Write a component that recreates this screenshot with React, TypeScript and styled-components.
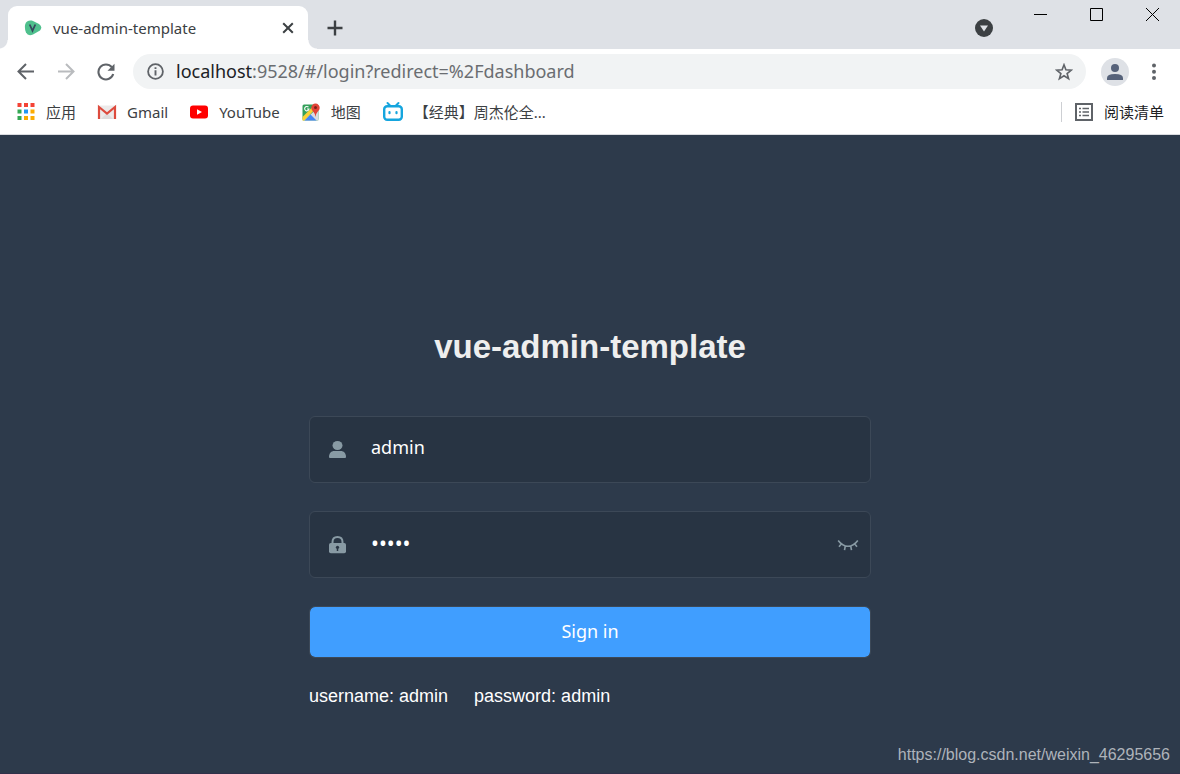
import React, { useState } from 'react';
import styled, { createGlobalStyle } from 'styled-components';

const uiFont = `"Noto Sans", "Noto Sans CJK SC", sans-serif`;
const pageFont = `"Liberation Sans", "Noto Sans CJK SC", sans-serif`;

const GlobalStyle = createGlobalStyle`
  *, *::before, *::after { box-sizing: border-box; }
  body { margin: 0; background: #2d3a4b; }
  svg { display: block; flex: none; }
  button { border: 0; padding: 0; background: none; font: inherit; color: inherit; cursor: pointer; }
`;

const Browser = styled.div`
  min-height: 100vh;
  display: flex;
  flex-direction: column;
  font-family: ${uiFont};
`;

const TitleBar = styled.header`
  display: flex;
  height: 49px;
  padding-left: 8px;
  background: #dee1e6;
`;

const Tab = styled.div`
  position: relative;
  display: flex;
  align-items: center;
  width: 300px;
  height: 43px;
  margin-top: 6px;
  padding: 0 13px 0 16px;
  border-radius: 9px 9px 0 0;
  background: #fff;
  color: #3c4043;

  &::before, &::after {
    content: '';
    position: absolute;
    bottom: 0;
    width: 9px;
    height: 9px;
  }
  &::before {
    right: 100%;
    background: radial-gradient(circle at 0 0, transparent 8px, #fff 9px);
  }
  &::after {
    left: 100%;
    background: radial-gradient(circle at 100% 0, transparent 8px, #fff 9px);
  }
`;

const TabTitle = styled.span`
  flex: 1;
  margin-left: 11px;
  font-size: 15px;
  line-height: 20px;
  white-space: nowrap;
`;

const IconButton = styled.button<{ $w: number; $h: number }>`
  display: flex;
  flex: none;
  align-items: center;
  justify-content: center;
  width: ${p => p.$w}px;
  height: ${p => p.$h}px;
`;

const TabActions = styled.div`
  display: flex;
  align-items: center;
  flex: 1;
  padding: 6px 0 0 11px;
`;

const TabSearch = styled.div`
  display: flex;
  align-items: center;
  padding: 6px 19px 0 0;
`;

const WindowControls = styled.div`
  display: flex;
  align-items: flex-start;
`;

const Toolbar = styled.nav`
  display: flex;
  align-items: center;
  height: 45px;
  padding: 0 7px 0 6px;
  background: #fff;
`;

const AddressBar = styled.div`
  display: flex;
  align-items: center;
  flex: 1;
  height: 35px;
  margin: 0 9px 0 7px;
  padding: 0 7px 0 14px;
  border-radius: 18px;
  background: #f1f3f4;
`;

const Url = styled.a`
  flex: 1;
  margin-left: 12px;
  padding-bottom: 2px;
  color: #6a6d71;
  font-size: 18px;
  line-height: 24px;
  text-decoration: none;
  white-space: nowrap;
`;

const Host = styled.span`
  color: #202124;
`;

const Bookmarks = styled.nav`
  display: flex;
  align-items: center;
  height: 41px;
  padding: 0 16px 4px;
  border-bottom: 1px solid #dadce0;
  background: #fff;
`;

const Bookmark = styled.a`
  display: flex;
  align-items: center;
  gap: 10px;
  margin-right: 21px;
  color: #3c4043;
  font-size: 15px;
  line-height: 20px;
  text-decoration: none;
  white-space: nowrap;
`;

const ReadingList = styled.button`
  display: flex;
  align-items: center;
  gap: 10px;
  height: 20px;
  margin-left: auto;
  padding-left: 12px;
  border-left: 1px solid #cdcfd3;
  color: #202124;
  font-size: 15px;
  line-height: 20px;
  white-space: nowrap;
`;

const LoginPage = styled.main`
  position: relative;
  flex: 1;
  padding: 191px 24px 64px;
  border-bottom: 1px solid #30304a;
  background: #2d3a4b;
  font-family: ${pageFont};
`;

const LoginForm = styled.form`
  max-width: 562px;
  margin: 0 auto;
`;

const Title = styled.h1`
  margin: 0 0 48px;
  color: #eee;
  font-size: 33px;
  font-weight: 700;
  line-height: 42px;
  text-align: center;
`;

const Field = styled.div`
  display: flex;
  align-items: center;
  height: 67px;
  margin-bottom: 28px;
  padding: 0 11px 0 18px;
  border: 1px solid #3c4857;
  border-radius: 6px;
  background: #283443;
  color: #889aa4;
`;

const FieldLabel = styled.label`
  display: flex;
`;

const TextInput = styled.input`
  flex: 1;
  min-width: 0;
  height: 50px;
  margin: 0 0 6px 16px;
  padding: 0 8px;
  border: 0;
  outline: 0;
  background: transparent;
  color: #fff;
  font-family: ${uiFont};
  font-size: 18px;

  &[type='password'] {
    padding-top: 2px;
    font-size: 21px;
  }
`;

const SubmitButton = styled.button`
  display: block;
  width: 100%;
  height: 52px;
  margin-bottom: 26px;
  padding-bottom: 2px;
  border: 1px solid #3c4857;
  border-radius: 6px;
  background: #409eff;
  background-clip: padding-box;
  color: #fff;
  font-family: ${uiFont};
  font-size: 18px;
  line-height: 24px;
`;

const Tips = styled.div`
  display: flex;
  gap: 26px;
  color: #fff;
  font-size: 18px;
  line-height: 24px;
`;

const Watermark = styled.a`
  position: absolute;
  right: 10px;
  bottom: 8px;
  color: #aeb3ba;
  font-size: 16px;
  line-height: 20px;
  text-decoration: none;
`;

const VueIcon = () => (
  <svg width="18" height="18" viewBox="0 0 18 18">
    <path d="M1 6C2 1.500 6 1 9 2l6 3q4 3 1 6.500L9 15.500q-5 2-7-2Q.5 10 1 6z" fill="#4fc08d" />
    <path d="M5.700 5.500 8.500 11.800l2.800-6.300" fill="none" stroke="#35495e" strokeWidth="1.800" />
  </svg>
);

const CloseIcon = () => (
  <svg width="12" height="12" viewBox="0 0 12 12" stroke="#3c4043" strokeWidth="2">
    <path d="m1.200 1.200 9.600 9.600m0-9.600-9.600 9.600" />
  </svg>
);

const PlusIcon = () => (
  <svg width="16" height="16" viewBox="0 0 16 16" stroke="#3c4043" strokeWidth="2.400">
    <path d="M8 .5v15M.5 8h15" />
  </svg>
);

const TabSearchIcon = () => (
  <svg width="18" height="18" viewBox="0 0 18 18">
    <circle cx="9" cy="9" r="9" fill="#3c4043" />
    <path d="M5 6.500h8L9 12.500z" fill="#dee1e6" />
  </svg>
);

const MinimizeIcon = () => (
  <svg width="13" height="13" viewBox="0 0 13 13" stroke="#000"><path d="M0 6.500h13" /></svg>
);
const MaximizeIcon = () => (
  <svg width="13" height="13" viewBox="0 0 13 13" stroke="#000" fill="none"><path d="M.5.5h12v12H.5z" /></svg>
);
const WindowCloseIcon = () => (
  <svg width="13" height="13" viewBox="0 0 13 13" stroke="#000"><path d="m0 0 13 13M13 0 0 13" /></svg>
);

const ArrowIcon = ({ color, flip }: { color: string; flip?: boolean }) => (
  <svg width="18" height="18" viewBox="0 0 18 18" fill="none" stroke={color} strokeWidth="2">
    <path d={flip ? 'M1 8.500h15M9 1 16.500 8.500 9 16' : 'M17 8.500H2M9 1 1.500 8.500 9 16'} />
  </svg>
);

const ReloadIcon = () => (
  <svg width="18" height="18" viewBox="0 0 18 18">
    <path d="M14.800 4.200A7.500 7.500 0 1 0 16.200 11" fill="none" stroke="#5f6368" strokeWidth="2.100" />
    <path d="M17.500.8v7h-7z" fill="#5f6368" />
  </svg>
);

const InfoIcon = () => (
  <svg width="17" height="17" viewBox="0 0 17 17" fill="none" stroke="#5f6368">
    <circle cx="8.500" cy="8.500" r="7.400" strokeWidth="1.800" />
    <path d="M8.500 7.300v5.200M8.500 4.200v1.900" strokeWidth="1.900" />
  </svg>
);

const StarIcon = () => (
  <svg width="18" height="18" viewBox="0 0 18 18" fill="none" stroke="#5f6368" strokeWidth="1.600">
    <path d="m9 1.800 1.900 5 5.500.3-4.300 3.400 1.500 5.200L9 12.800l-4.600 2.900 1.500-5.200-4.300-3.400 5.500-.3z" />
  </svg>
);

const ProfileIcon = () => (
  <svg width="28" height="28" viewBox="0 0 28 28">
    <circle cx="14" cy="14" r="14" fill="#dee1e6" />
    <circle cx="14" cy="10" r="4" fill="#56627a" />
    <path d="M6 22v-2q0-4 8-4t8 4v2z" fill="#56627a" />
  </svg>
);

const MenuIcon = () => (
  <svg width="4" height="18" viewBox="0 0 4 18" fill="#5f6368">
    <circle cx="2" cy="2.500" r="2" /><circle cx="2" cy="8.700" r="2" /><circle cx="2" cy="15" r="2" />
  </svg>
);

const appColors = ['#f44336', '#f44336', '#f44336', '#34a853', '#2196f3', '#fbab00', '#34a853', '#fbab00', '#fbab00'];
const AppsIcon = () => (
  <svg width="20" height="20" viewBox="0 0 20 20">
    {appColors.map((c, i) => (
      <rect key={i} x={1.5 + (i % 3) * 6.5} y={1 + Math.floor(i / 3) * 6.5} width="4" height="4" fill={c} />
    ))}
  </svg>
);

const GmailIcon = () => (
  <svg width="20" height="20" viewBox="0 0 20 20">
    <path d="M1 3.500h18v13.500H1z" fill="#eceaea" />
    <path d="m4 17 6-6 6 6z" fill="#dedcdc" />
    <path d="M2 17V5l8 6.500L18 5v12" fill="none" stroke="#dd4b3e" strokeWidth="2.200" />
  </svg>
);

const YouTubeIcon = () => (
  <svg width="20" height="20" viewBox="0 0 20 20">
    <rect x="1" y="3.500" width="18" height="13" rx="3" fill="#f00" />
    <path d="m8 7.300 5 2.700-5 2.700z" fill="#fff" />
  </svg>
);

const MapsIcon = () => (
  <svg width="20" height="20" viewBox="0 0 20 20">
    <rect x="1.500" y="2.500" width="16" height="16" rx="1.500" fill="#34a05a" />
    <path d="M3 18.500 17.500 5v13.500z" fill="#d9dce0" />
    <path d="M1.500 15 13 3.500 16 5 3.500 18.500h-2z" fill="#fbd036" />
    <path d="m3.500 18.500 6-6 6 6z" fill="#4285f4" />
    <path d="M7.500 5.200A2.200 2.200 0 1 0 8 7H6" fill="none" stroke="#fff" strokeWidth="1.100" />
    <path d="M14.500 15q-.7-4-2.700-6a4.200 4.200 0 1 1 5.400 0q-2 2-2.700 6z" fill="#e24438" />
    <circle cx="14.500" cy="5.500" r="1.500" fill="#7d2018" />
  </svg>
);

const BilibiliIcon = () => (
  <svg width="22" height="22" viewBox="0 0 22 22" fill="none" stroke="#15a5de" strokeLinecap="round">
    <rect x="2.200" y="5.200" width="17.600" height="13.600" rx="3" strokeWidth="2.400" />
    <path d="m5.500 2 2.500 2.500M16.500 2 14 4.500" strokeWidth="2" />
    <path d="M7.500 11v1.200M14.500 11v1.200" strokeWidth="2.200" />
  </svg>
);

const ReadingListIcon = () => (
  <svg width="20" height="20" viewBox="0 0 20 20" fill="none" stroke="#5f6368">
    <path d="M2 2h16v16H2z" strokeWidth="2" />
    <path d="M5 6.500h2M8.500 6.500H15M5 10h2M8.500 10H15M5 13.500h2M8.500 13.500H15" strokeWidth="1.500" />
  </svg>
);

const UserIcon = () => (
  <svg width="19" height="18" viewBox="0 0 19 18" fill="currentColor">
    <ellipse cx="9.500" cy="4.500" rx="5" ry="4.500" />
    <path d="M1 16C1 12 3.500 10 6 10h7c2.500 0 5 2 5 6q0 1-1 1H2q-1 0-1-1z" />
  </svg>
);

const LockIcon = () => (
  <svg width="19" height="18" viewBox="0 0 19 18">
    <path d="M4.500 8V6q0-5 5-5t5 5v2" fill="none" stroke="currentColor" strokeWidth="2" />
    <rect x="1" y="7" width="17" height="10.300" rx="1.800" fill="currentColor" />
    <circle cx="9.500" cy="11.300" r="1.600" fill="#283443" />
    <path d="M9.500 12v3" stroke="#283443" strokeWidth="1.500" />
  </svg>
);

const EyeClosedIcon = () => (
  <svg width="22" height="12" viewBox="0 0 22 12" fill="none" stroke="currentColor" strokeWidth="1.600">
    <path d="M1.200 1.500Q5.500 7.300 11 7.300t9.800-5.800M4.500 4.800 2 7.800M17.500 4.800 20 7.800M8.300 7 7.500 11.200M13.700 7l.8 4.200" />
  </svg>
);

export default function App() {
  const [username, setUsername] = useState('admin');
  const [password, setPassword] = useState('admin');
  const [visible, setVisible] = useState(false);

  return (
    <Browser>
      <GlobalStyle />
      <TitleBar>
        <Tab>
          <VueIcon />
          <TabTitle>vue-admin-template</TabTitle>
          <IconButton $w={14} $h={20} aria-label="Close tab"><CloseIcon /></IconButton>
        </Tab>
        <TabActions>
          <IconButton $w={32} $h={32} aria-label="New tab"><PlusIcon /></IconButton>
        </TabActions>
        <TabSearch>
          <IconButton $w={18} $h={18} aria-label="Search tabs"><TabSearchIcon /></IconButton>
        </TabSearch>
        <WindowControls>
          <IconButton $w={56} $h={29} aria-label="Minimize"><MinimizeIcon /></IconButton>
          <IconButton $w={56} $h={29} aria-label="Maximize"><MaximizeIcon /></IconButton>
          <IconButton $w={56} $h={29} aria-label="Close window"><WindowCloseIcon /></IconButton>
        </WindowControls>
      </TitleBar>

      <Toolbar aria-label="Navigation">
        <IconButton $w={40} $h={36} aria-label="Back"><ArrowIcon color="#5f6368" /></IconButton>
        <IconButton $w={40} $h={36} aria-label="Forward"><ArrowIcon color="#b9bbbe" flip /></IconButton>
        <IconButton $w={40} $h={36} aria-label="Reload"><ReloadIcon /></IconButton>
        <AddressBar>
          <InfoIcon />
          <Url href="#/login?redirect=%2Fdashboard">
            <Host>localhost</Host>:9528/#/login?redirect=%2Fdashboard
          </Url>
          <IconButton $w={30} $h={30} aria-label="Bookmark this page"><StarIcon /></IconButton>
        </AddressBar>
        <IconButton $w={40} $h={36} aria-label="Profile"><ProfileIcon /></IconButton>
        <IconButton $w={38} $h={36} aria-label="Menu"><MenuIcon /></IconButton>
      </Toolbar>

      <Bookmarks aria-label="Bookmarks">
        <Bookmark href="#apps"><AppsIcon />应用</Bookmark>
        <Bookmark href="#gmail"><GmailIcon />Gmail</Bookmark>
        <Bookmark href="#youtube"><YouTubeIcon />YouTube</Bookmark>
        <Bookmark href="#maps"><MapsIcon />地图</Bookmark>
        <Bookmark href="#bilibili"><BilibiliIcon />【经典】周杰伦全...</Bookmark>
        <ReadingList><ReadingListIcon />阅读清单</ReadingList>
      </Bookmarks>

      <LoginPage>
        <LoginForm onSubmit={e => e.preventDefault()}>
          <Title>vue-admin-template</Title>
          <Field>
            <FieldLabel htmlFor="username" aria-label="Username"><UserIcon /></FieldLabel>
            <TextInput id="username" type="text" value={username} onChange={e => setUsername(e.target.value)} />
          </Field>
          <Field>
            <FieldLabel htmlFor="password" aria-label="Password"><LockIcon /></FieldLabel>
            <TextInput
              id="password"
              type={visible ? 'text' : 'password'}
              value={password}
              onChange={e => setPassword(e.target.value)}
            />
            <IconButton $w={22} $h={22} type="button" aria-label="Show password" onClick={() => setVisible(!visible)}>
              <EyeClosedIcon />
            </IconButton>
          </Field>
          <SubmitButton type="submit">Sign in</SubmitButton>
          <Tips>
            <span>username: admin</span>
            <span>password: admin</span>
          </Tips>
        </LoginForm>
        <Watermark href="#author">https://blog.csdn.net/weixin_46295656</Watermark>
      </LoginPage>
    </Browser>
  );
}
